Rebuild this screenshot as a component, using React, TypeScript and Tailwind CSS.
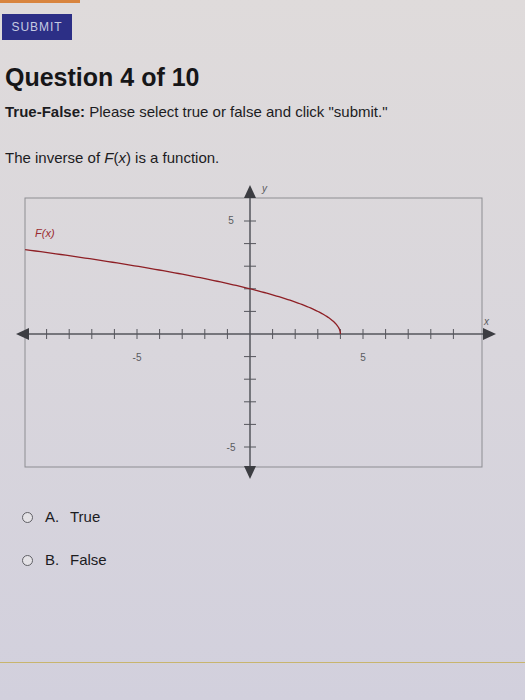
import React from 'react';

const U = 22.6;
const OX = 250;
const OY = 334;

const px = (x: number) => OX + x * U;
const py = (y: number) => OY - y * U;

// F(x) = sqrt(4 - x), drawn from the left edge of the box to its endpoint at x = 4
const curve = (() => {
  const pts: string[] = [];
  for (let i = 0; i <= 120; i++) {
    const t = i / 120;
    // denser sampling near x = 4 where the slope goes vertical
    const x = -9.95 + (4 + 9.95) * (1 - Math.pow(1 - t, 2));
    const y = Math.sqrt(Math.max(0, 4 - x));
    pts.push(`${px(x).toFixed(2)},${py(y).toFixed(2)}`);
  }
  return 'M' + pts.join(' L');
})();

const xTicks = [-9, -8, -7, -6, -5, -4, -3, -2, -1, 1, 2, 3, 4, 5, 6, 7, 8, 9];
const yTicks = [-5, -4, -3, -2, -1, 1, 2, 3, 4, 5];

function Graph() {
  return (
    <svg width={525} height={300} viewBox="0 180 525 300" className="block">
      {/* frame */}
      <rect x={25} y={198} width={457} height={269} fill="none" stroke="#8d8d92" strokeWidth={1} />

      {/* axes */}
      <line x1={26} y1={OY} x2={488} y2={OY} stroke="#55565c" strokeWidth={1.5} />
      <line x1={OX} y1={194} x2={OX} y2={470} stroke="#55565c" strokeWidth={1.5} />
      <polygon points="16,334 29,328 29,340" fill="#3c3d42" />
      <polygon points="496,334 483,328 483,340" fill="#3c3d42" />
      <polygon points="250,185 244,198 256,198" fill="#3c3d42" />
      <polygon points="250,479 244,466 256,466" fill="#3c3d42" />

      {/* ticks */}
      {xTicks.map((t) => (
        <line key={'x' + t} x1={px(t)} y1={OY - 5} x2={px(t)} y2={OY + 5} stroke="#55565c" strokeWidth={1} />
      ))}
      {yTicks.map((t) => (
        <line key={'y' + t} x1={OX - 6} y1={py(t)} x2={OX + 6} y2={py(t)} stroke="#55565c" strokeWidth={1} />
      ))}

      {/* tick labels */}
      <g fill="#5a5b60" fontSize={10} fontFamily="'Liberation Sans', Arial, sans-serif">
        <text x={px(-5)} y={361} textAnchor="middle">-5</text>
        <text x={px(5)} y={361} textAnchor="middle">5</text>
        <text x={231} y={224} textAnchor="middle">5</text>
        <text x={231} y={451} textAnchor="middle">-5</text>
        <text x={262} y={192} fontStyle="italic">y</text>
        <text x={484} y={325} fontStyle="italic">x</text>
      </g>

      {/* function */}
      <path d={curve} fill="none" stroke="#8e1f25" strokeWidth={1.3} />
      <text x={35} y={237} fill="#9a2a30" fontSize={11} fontStyle="italic" fontFamily="'Liberation Sans', Arial, sans-serif">
        F(x)
      </text>
    </svg>
  );
}

function Option({ letter, label }: { letter: string; label: string }) {
  return (
    <div className="flex items-center h-[20px] pl-[22px] text-[15px] text-[#1c1c1f]">
      <span className="w-[11px] h-[11px] rounded-full border border-[#606066] bg-[#e4e2e6]" />
      <span className="ml-[12px] w-[25px]">{letter}</span>
      <span>{label}</span>
    </div>
  );
}

export default function App() {
  return (
    <div
      className="relative w-[525px] h-[700px] overflow-hidden bg-gradient-to-b from-[#dfdbdb] via-[#d9d6dc] to-[#d2d0dd] flex flex-col"
      style={{ fontFamily: "'Liberation Sans', Arial, sans-serif" }}
    >
      <div className="w-[80px] h-[3px] bg-[#d8843e]" />

      <div className="mt-[11px] ml-[2px]">
        <button className="w-[70px] h-[26px] bg-[#2c2f86] text-[#c6cbe2] text-[12px] tracking-[0.08em] flex items-center justify-center">
          SUBMIT
        </button>
      </div>

      <h1 className="mt-[22px] ml-[5px] h-[30px] leading-[30px] text-[25px] font-bold text-[#161618]">
        Question 4 of 10
      </h1>

      <p className="mt-[10px] ml-[5px] h-[20px] leading-[20px] text-[15px] text-[#1c1c1f]">
        <span className="font-bold">True-False:</span> Please select true or false and click "submit."
      </p>

      <p className="mt-[26px] ml-[5px] h-[20px] leading-[20px] text-[15px] text-[#1c1c1f]">
        The inverse of <i>F</i>(<i>x</i>) is a function.
      </p>

      <div className="mt-[12px]">
        <Graph />
      </div>

      <div className="mt-[27px] flex flex-col gap-[23px]">
        <Option letter="A." label="True" />
        <Option letter="B." label="False" />
      </div>

      <div className="mt-[92px] h-[1px] bg-[#c8b56e]" />
    </div>
  );
}
